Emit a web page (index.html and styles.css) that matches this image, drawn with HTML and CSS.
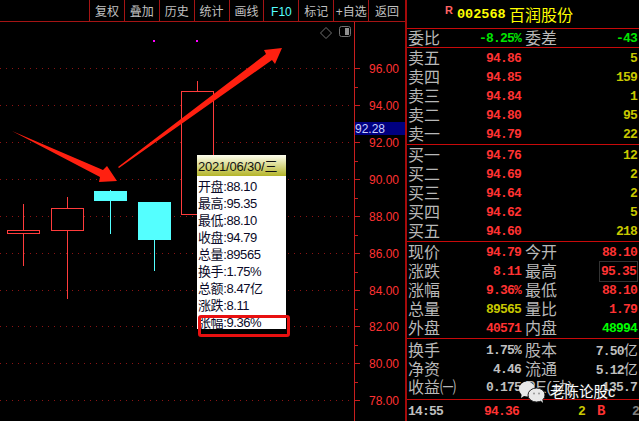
FILE: index.html
```html
<!DOCTYPE html>
<html lang="zh-CN">
<head>
    <meta charset="UTF-8">
    <title>百润股份 002568</title>
    <link rel="stylesheet" href="styles.css">
</head>
<body>
    <div class="app">
        <div class="left">
            <div class="toolbar">
                <span class="tool">复权</span>
                <span class="tool">叠加</span>
                <span class="tool">历史</span>
                <span class="tool">统计</span>
                <span class="tool">画线</span>
                <span class="tool tool-active">F10</span>
                <span class="tool">标记</span>
                <span class="tool">+自选</span>
                <span class="tool tool-last">返回</span>
            </div>
            <div class="chart">
                <svg class="chart-svg" viewBox="0 22 405 399" width="405" height="399">
                    <!-- grid -->
                    <path class="grid" d="M0 68.5H354M0 105.5H354M0 142.5H354M0 179.5H354M0 216.5H354M0 253.5H354M0 290.5H354M0 326.5H354M0 363.5H354M0 400.5H354"/>
                    <!-- axis -->
                    <path class="axis" d="M354.5 22V421M355 68.5H360M355 105.5H360M355 142.5H360M355 179.5H360M355 216.5H360M355 253.5H360M355 290.5H360M355 326.5H360M355 363.5H360M355 400.5H360M355 87.5H358M355 161.5H358M355 198.5H358M355 235.5H358M355 272.5H358M355 309.5H358M355 345.5H358M355 382.5H358"/>
                    <text class="axis-label" x="369" y="73">96.00</text>
                    <text class="axis-label" x="369" y="110">94.00</text>
                    <text class="axis-label" x="369" y="147">92.00</text>
                    <text class="axis-label" x="369" y="184">90.00</text>
                    <text class="axis-label" x="369" y="221">88.00</text>
                    <text class="axis-label" x="369" y="258">86.00</text>
                    <text class="axis-label" x="369" y="295">84.00</text>
                    <text class="axis-label" x="369" y="331">82.00</text>
                    <text class="axis-label" x="369" y="368">80.00</text>
                    <text class="axis-label" x="369" y="405">78.00</text>
                    <rect class="price-box" x="355" y="122" width="50" height="13"/>
                    <text class="price-label" x="355" y="133">92.28</text>
                    <!-- candles -->
                    <path class="up" d="M23.5 204V266M67.5 197V299M197.5 81V91"/>
                    <rect class="up-body" x="7.500" y="230.5" width="32" height="3"/>
                    <rect class="up-body" x="51.5" y="208.5" width="32" height="22"/>
                    <rect class="up-body" x="181.5" y="91.5" width="32" height="123"/>
                    <path class="down" d="M110.5 190V234M154.5 240V271"/>
                    <rect class="down-body" x="94" y="191" width="33" height="10"/>
                    <rect class="down-body" x="138" y="202" width="33" height="38"/>
                    <rect class="dot" x="153" y="40" width="2" height="2"/>
                    <rect class="dot" x="196" y="40" width="2" height="2"/>
                    <!-- corner icons -->
                    <path class="corner" d="M326 27.5L331.5 33L326 38.5L320.5 33Z"/>
                    <rect class="corner" x="339.5" y="26.5" width="11" height="10" rx="2"/>
                    <rect class="corner-fill" x="345" y="28" width="4" height="7"/>
                    <!-- arrows -->
                    <path class="arrow" d="M12 131L103 170L107 166L117 181L99 182L100 177Z"/>
                    <path class="arrow" d="M118 167L266 54L264 50L282 48L275 64L272 60L119 168Z"/>
                </svg>
                <div class="tip">
                    <div class="tip-head">2021/06/30/三</div>
                    <div class="tip-row">开盘:88.10</div>
                    <div class="tip-row">最高:95.35</div>
                    <div class="tip-row">最低:88.10</div>
                    <div class="tip-row">收盘:94.79</div>
                    <div class="tip-row">总量:89565</div>
                    <div class="tip-row">换手:1.75%</div>
                    <div class="tip-row">总额:8.47亿</div>
                    <div class="tip-row">涨跌:8.11</div>
                    <div class="tip-row">张幅:9.36%</div>
                    <div class="tip-mark"></div>
                </div>
            </div>
        </div>

        <div class="panel">
            <div class="stock-head">
                <span class="stock-r">R</span>
                <span class="stock-code">002568</span>
                <span class="stock-name">百润股份</span>
            </div>
            <div class="section section-ratio">
                <div class="row">
                    <span class="label">委比</span><span class="val green">-8.25%</span>
                    <span class="label">委差</span><span class="val green">-43</span>
                </div>
            </div>
            <div class="section section-five">
                <div class="row row-two"><span class="label">卖五</span><span class="val red">94.86</span><span class="val yellow">5</span></div>
                <div class="row row-two"><span class="label">卖四</span><span class="val red">94.85</span><span class="val yellow">159</span></div>
                <div class="row row-two"><span class="label">卖三</span><span class="val red">94.84</span><span class="val yellow">1</span></div>
                <div class="row row-two"><span class="label">卖二</span><span class="val red">94.80</span><span class="val yellow">95</span></div>
                <div class="row row-two"><span class="label">卖一</span><span class="val red">94.79</span><span class="val yellow">22</span></div>
            </div>
            <div class="section section-five">
                <div class="row row-two"><span class="label">买一</span><span class="val red">94.76</span><span class="val yellow">12</span></div>
                <div class="row row-two"><span class="label">买二</span><span class="val red">94.69</span><span class="val yellow">2</span></div>
                <div class="row row-two"><span class="label">买三</span><span class="val red">94.64</span><span class="val yellow">2</span></div>
                <div class="row row-two"><span class="label">买四</span><span class="val red">94.62</span><span class="val yellow">5</span></div>
                <div class="row row-two"><span class="label">买五</span><span class="val red">94.60</span><span class="val yellow">218</span></div>
            </div>
            <div class="section section-five">
                <div class="row">
                    <span class="label">现价</span><span class="val red">94.79</span>
                    <span class="label">今开</span><span class="val red">88.10</span>
                </div>
                <div class="row">
                    <span class="label">涨跌</span><span class="val red">8.11</span>
                    <span class="label">最高</span><span class="val red"><span class="high-box">95.35</span></span>
                </div>
                <div class="row">
                    <span class="label">涨幅</span><span class="val red">9.36%</span>
                    <span class="label">最低</span><span class="val red">88.10</span>
                </div>
                <div class="row">
                    <span class="label">总量</span><span class="val yellow">89565</span>
                    <span class="label">量比</span><span class="val red">1.79</span>
                </div>
                <div class="row">
                    <span class="label">外盘</span><span class="val red">40571</span>
                    <span class="label">内盘</span><span class="val lime">48994</span>
                </div>
            </div>
            <div class="section section-three">
                <div class="row">
                    <span class="label">换手</span><span class="val grey">1.75%</span>
                    <span class="label">股本</span><span class="val grey">7.50<span class="unit">亿</span></span>
                </div>
                <div class="row">
                    <span class="label">净资</span><span class="val grey">4.46</span>
                    <span class="label">流通</span><span class="val grey">5.12<span class="unit">亿</span></span>
                </div>
                <div class="row">
                    <span class="label">收益㈠</span><span class="val grey">0.175</span>
                    <span class="label">PE(动)</span><span class="val grey">135.7</span>
                </div>
            </div>
            <div class="tick-row">
                <span class="tick-time">14:55</span>
                <span class="tick-price">94.36</span>
                <span class="tick-vol">2</span>
                <span class="tick-side">B</span>
                <span class="tick-count">2</span>
            </div>
        </div>
    </div>

    <div class="watermark">
        <svg class="wechat" viewBox="0 0 26 22" width="26" height="22">
            <ellipse class="bubble" cx="8" cy="8" rx="8" ry="7.500"/>
            <path class="bubble" d="M3 12L2 17L8 13Z"/>
            <ellipse class="bubble-back" cx="17.5" cy="14" rx="8.5" ry="7"/>
            <path class="bubble" d="M21 19L24 22L23 17Z"/>
            <circle class="eye" cx="15" cy="12.5" r="1"/>
            <circle class="eye" cx="20" cy="12.5" r="1"/>
        </svg>
        <span class="watermark-text">老陈论股c</span>
    </div>
</body>
</html>
```

FILE: styles.css
```css
body {
    margin: 0;
    padding: 0;
    background-color: #000;
    font-family: "Liberation Sans", "Noto Sans CJK SC", sans-serif;
    overflow: hidden;
}
.app {
    display: flex;
    width: 639px;
    height: 421px;
}
.left {
    width: 405px;
    display: flex;
    flex-direction: column;
}
.toolbar {
    display: flex;
    height: 21px;
    padding-left: 89px;
    border-bottom: 1px solid #a51414;
}
.tool {
    width: 34px;
    border-left: 1px solid #a51414;
    color: #c0c0c0;
    font-size: 12px;
    line-height: 24px;
    text-align: center;
    white-space: nowrap;
}
.tool-active {
    color: #54ffff;
}
.tool-last {
    width: 36px;
}
.chart {
    position: relative;
    flex: 1;
}
.chart-svg {
    display: block;
}
.grid {
    fill: none;
    stroke: #8c1414;
    stroke-dasharray: 1 5;
}
.axis {
    fill: none;
    stroke: #c81e1e;
}
.axis-label {
    fill: #ff3232;
    font-size: 12px;
}
.price-box {
    fill: #000080;
}
.price-label {
    fill: #c8d0ff;
    font-size: 12px;
}
.up {
    fill: none;
    stroke: #ff3c3c;
}
.up-body {
    fill: #000;
    stroke: #ff3c3c;
}
.down {
    fill: none;
    stroke: #54ffff;
}
.down-body {
    fill: #54ffff;
}
.dot {
    fill: #ff00ff;
}
.corner {
    fill: none;
    stroke: #707070;
}
.corner-fill {
    fill: #909090;
}
.arrow {
    fill: #ff2010;
}
.tip {
    position: absolute;
    left: 197px;
    top: 133px;
    width: 89px;
    height: 174px;
    background: #fff;
}
.tip-head {
    height: 21px;
    margin-bottom: 2px;
    padding-left: 1px;
    background: linear-gradient(#fffff0, #b4b428);
    color: #111;
    font-size: 13px;
    letter-spacing: -0.2px;
    line-height: 23px;
    white-space: nowrap;
}
.tip-row {
    height: 17px;
    padding-left: 1px;
    color: #0a0a28;
    font-size: 13px;
    letter-spacing: -0.4px;
    line-height: 17px;
    white-space: nowrap;
}
.tip-mark {
    position: absolute;
    left: 1px;
    top: 160px;
    width: 86px;
    height: 16px;
    border: 3px solid #e81010;
    border-radius: 3px;
}
.panel {
    width: 234px;
    box-sizing: border-box;
    border-left: 2px solid #a50a0a;
    padding-left: 1px;
    color: #b8b8b8;
    font-size: 16px;
}
.stock-head {
    display: flex;
    align-items: center;
    height: 28px;
    padding-left: 38px;
    margin-left: -1px;
    border-bottom: 1px solid #c80a0a;
    white-space: nowrap;
}
.stock-r {
    width: 12px;
    margin-top: -8px;
    color: #ff6464;
    font-size: 11px;
    font-weight: bold;
}
.stock-code {
    width: 52px;
    color: #ffff00;
    font-family: "Liberation Mono", monospace;
    font-size: 13.5px;
    font-weight: bold;
}
.stock-name {
    color: #ffff00;
    font-size: 16px;
}
.section {
    box-sizing: border-box;
    margin-left: -1px;
    padding-left: 1px;
    padding-top: 1px;
    border-bottom: 1px solid #c80a0a;
}
.section-ratio {
    height: 19px;
}
.section-five {
    height: 97px;
}
.section-three {
    height: 61px;
}
.row {
    display: grid;
    grid-template-columns: 32px 77px 32px 76px;
    column-gap: 4px;
    align-items: center;
    height: 19px;
    line-height: 19px;
    white-space: nowrap;
}
.section-ratio .row {
    height: 17px;
    line-height: 17px;
}
.row-two {
    grid-template-columns: 32px 77px 112px;
}
.val {
    font-family: "Liberation Mono", monospace;
    font-size: 13px;
    font-weight: bold;
    letter-spacing: -0.8px;
    text-align: right;
}
.unit {
    font-family: "Noto Sans CJK SC", sans-serif;
    font-weight: normal;
    font-size: 14px;
}
.red {
    color: #ff3232;
}
.green {
    color: #00e600;
}
.lime {
    color: #00ff00;
}
.yellow {
    color: #c8c800;
}
.grey {
    color: #c0c0c0;
}
.high-box {
    outline: 1px solid #333;
    padding: 2px 1px;
}
.tick-row {
    display: flex;
    height: 21px;
    line-height: 23px;
    font-family: "Liberation Mono", monospace;
    font-size: 13px;
    font-weight: bold;
    letter-spacing: -0.8px;
}
.tick-time {
    width: 76px;
    color: #c0c0c0;
}
.tick-price {
    width: 94px;
    color: #ff3232;
}
.tick-vol {
    width: 19px;
    color: #c8c800;
}
.tick-side {
    width: 35px;
    color: #ff3232;
    font-size: 14px;
}
.tick-count {
    color: #808080;
}
.watermark {
    position: absolute;
    left: 519px;
    top: 381px;
    display: flex;
    align-items: center;
    gap: 5px;
}
.wechat {
    display: block;
}
.bubble {
    fill: #e8e8e8;
}
.bubble-back {
    fill: #e8e8e8;
    stroke: #222;
}
.eye {
    fill: #999;
}
.watermark-text {
    color: #fff;
    font-size: 14.5px;
    line-height: 22px;
    text-shadow: 0 0 2px #333;
}
```
